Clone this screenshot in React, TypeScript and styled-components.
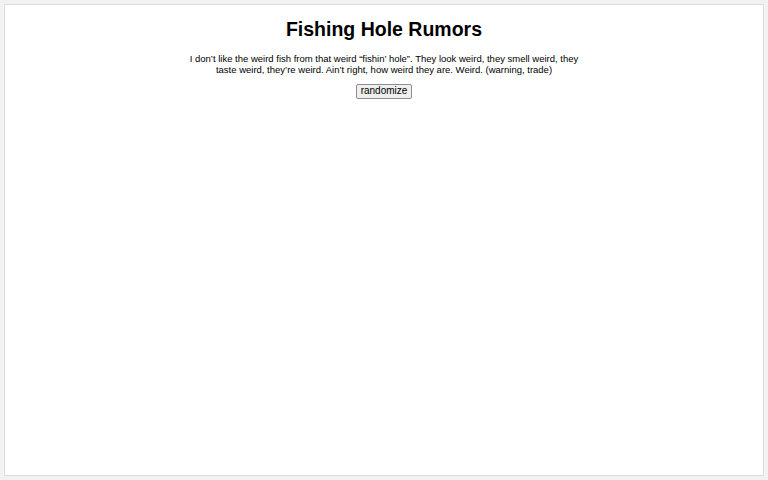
import React, { useState } from 'react';
import styled, { createGlobalStyle } from 'styled-components';

const rumors = [
  'I don\u2019t like the weird fish from that weird \u201cfishin\u2019 hole\u201d. They look weird, they smell weird, they taste weird, they\u2019re weird. Ain\u2019t right, how weird they are. Weird. (warning, trade)',
  'Old Pete swears the big one down there took his boot clean off his foot. Nobody\u2019s seen the boot since. (gossip, fishing)',
  'They say if you cast at midnight the water hums back at you. Best not to listen too long. (warning, lore)',
];

const App = () => {
  const [index, setIndex] = useState(0);

  const randomize = () => {
    let next = index;
    while (next === index) next = Math.floor(Math.random() * rumors.length);
    setIndex(next);
  };

  return (
    <>
      <GlobalStyle />
      <Card>
        <Title>Fishing Hole Rumors</Title>
        <Rumor>{rumors[index]}</Rumor>
        <RandomButton onClick={randomize}>randomize</RandomButton>
      </Card>
    </>
  );
};

export default App;

const GlobalStyle = createGlobalStyle`
  html, body {
    margin: 0;
    background: #f2f2f2;
  }
  body {
    padding: 4px;
    box-sizing: border-box;
    font-family: 'Liberation Sans', Arial, sans-serif;
  }
`;

const Card = styled.div`
  box-sizing: border-box;
  height: calc(100vh - 8px);
  background: #ffffff;
  border: 1px solid #dcdcdc;
  display: flex;
  flex-direction: column;
  align-items: center;
  padding-top: 13px;
`;

const Title = styled.h1`
  margin: 0;
  font-size: 19.5px;
  line-height: 22px;
  font-weight: bold;
  color: #000;
`;

const Rumor = styled.p`
  margin: 13px 0 0;
  max-width: 396px;
  font-size: 9.5px;
  line-height: 11px;
  text-align: center;
  color: #000;
`;

const RandomButton = styled.button`
  margin-top: 9px;
  font-family: 'Liberation Sans', Arial, sans-serif;
  font-size: 10px;
  line-height: 12px;
  padding: 0 4px 1px;
  color: #000;
  background: #efefef;
  border: 1px solid #8f8f8f;
  border-radius: 2px;
`;
